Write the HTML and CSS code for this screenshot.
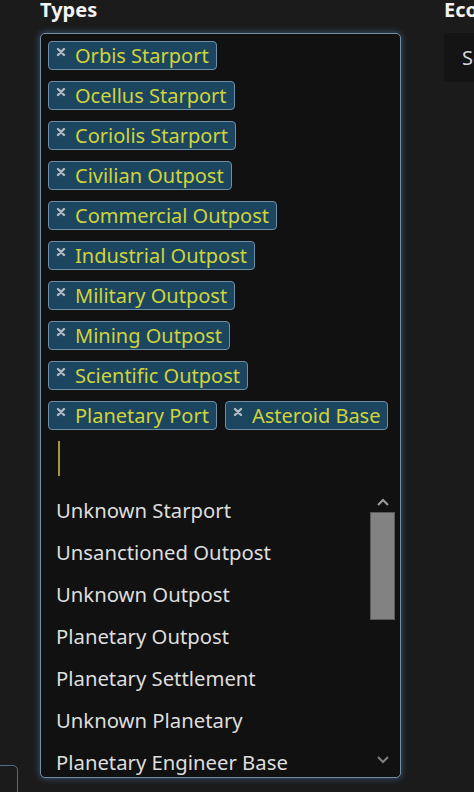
FILE: index.html
```html
<!DOCTYPE html>
<html lang="en">
<head>
<meta charset="utf-8">
<title>Types</title>
<link rel="stylesheet" href="styles.css">
</head>
<body>
<div class="page">
  <div class="field field-types">
    <div class="label">Types</div>
    <div class="multiselect">
      <div class="tags">
        <span class="tag"><svg class="x" viewBox="0 0 10 10"><path d="M2 2 L8 8 M8 2 L2 8"/></svg>Orbis Starport</span>
        <span class="tag"><svg class="x" viewBox="0 0 10 10"><path d="M2 2 L8 8 M8 2 L2 8"/></svg>Ocellus Starport</span>
        <span class="tag"><svg class="x" viewBox="0 0 10 10"><path d="M2 2 L8 8 M8 2 L2 8"/></svg>Coriolis Starport</span>
        <span class="tag"><svg class="x" viewBox="0 0 10 10"><path d="M2 2 L8 8 M8 2 L2 8"/></svg>Civilian Outpost</span>
        <span class="tag"><svg class="x" viewBox="0 0 10 10"><path d="M2 2 L8 8 M8 2 L2 8"/></svg>Commercial Outpost</span>
        <span class="tag"><svg class="x" viewBox="0 0 10 10"><path d="M2 2 L8 8 M8 2 L2 8"/></svg>Industrial Outpost</span>
        <span class="tag"><svg class="x" viewBox="0 0 10 10"><path d="M2 2 L8 8 M8 2 L2 8"/></svg>Military Outpost</span>
        <span class="tag"><svg class="x" viewBox="0 0 10 10"><path d="M2 2 L8 8 M8 2 L2 8"/></svg>Mining Outpost</span>
        <span class="tag"><svg class="x" viewBox="0 0 10 10"><path d="M2 2 L8 8 M8 2 L2 8"/></svg>Scientific Outpost</span>
        <span class="tag"><svg class="x" viewBox="0 0 10 10"><path d="M2 2 L8 8 M8 2 L2 8"/></svg>Planetary Port</span>
        <span class="tag"><svg class="x" viewBox="0 0 10 10"><path d="M2 2 L8 8 M8 2 L2 8"/></svg>Asteroid Base</span>
      </div>
      <div class="input-row"><span class="caret"></span></div>
      <div class="dropdown">
        <ul class="options">
          <li>Unknown Starport</li>
          <li>Unsanctioned Outpost</li>
          <li>Unknown Outpost</li>
          <li>Planetary Outpost</li>
          <li>Planetary Settlement</li>
          <li>Unknown Planetary</li>
          <li>Planetary Engineer Base</li>
        </ul>
        <div class="scrollbar">
          <svg class="arrow" width="14" height="10" viewBox="0 0 14 10"><path d="M2 8 L7 3 L12 8" fill="none" stroke="#9a9a9a" stroke-width="2.2"/></svg>
          <div class="thumb"></div>
          <div class="track"></div>
          <svg class="arrow arrow-down" width="14" height="10" viewBox="0 0 14 10"><path d="M2 2 L7 7 L12 2" fill="none" stroke="#7e7e7e" stroke-width="2.2"/></svg>
        </div>
      </div>
    </div>
  </div>
  <div class="field field-eco">
    <div class="label">Economy</div>
    <div class="select">Select</div>
  </div>
</div>
<div class="corner-box"></div>
</body>
</html>
```
FILE: styles.css
```css
html, body {
  margin: 0;
  padding: 0;
  background: #1b1b1b;
  height: 792px;
  overflow: hidden;
}
body {
  font-family: "Noto Sans", "Open Sans", sans-serif;
  color: #e0e0e0;
  position: relative;
}
.page {
  display: flex;
  gap: 43px;
  padding-left: 40px;
}
.field-types {
  width: 361px;
  flex: none;
}
.field-eco {
  flex: none;
  width: 200px;
}
.label {
  font-weight: 700;
  font-size: 20px;
  line-height: 20px;
  color: #f2f2f2;
  height: 33px;
}
.multiselect {
  box-sizing: border-box;
  height: 745px;
  border: 1px solid #7090aa;
  border-radius: 5px;
  background: #111111;
  box-shadow: 0 0 6px 1px rgba(90, 140, 190, 0.45);
  padding: 7px 5px 0 7px;
  overflow: hidden;
  display: flex;
  flex-direction: column;
}
.tags {
  display: flex;
  flex-wrap: wrap;
  row-gap: 11px;
  column-gap: 8px;
}
.tag {
  display: inline-flex;
  align-items: center;
  box-sizing: border-box;
  height: 29px;
  padding: 0 7px 0 7px;
  background: #1c4660;
  border: 1px solid #6d8fa8;
  border-radius: 4px;
  color: #cfd43c;
  font-size: 20px;
  line-height: 27px;
  white-space: nowrap;
}
.x {
  width: 10px;
  height: 10px;
  align-self: flex-start;
  margin-top: 5px;
  margin-right: 9px;
  fill: none;
  stroke: #b4bcc4;
  stroke-width: 2.4;
  stroke-linecap: round;
}
.input-row {
  height: 59px;
  padding-left: 10px;
  padding-top: 11px;
  box-sizing: border-box;
}
.caret {
  display: block;
  width: 2px;
  height: 35px;
  background: #a8983c;
}
.dropdown {
  display: flex;
  flex: 1;
  min-height: 0;
}
.options {
  list-style: none;
  margin: 0;
  padding: 0 0 0 8px;
  flex: 1;
}
.options li {
  height: 42px;
  line-height: 42px;
  font-size: 20.3px;
  color: #dedede;
  white-space: nowrap;
}
.scrollbar {
  width: 25px;
  flex: none;
  display: flex;
  flex-direction: column;
  align-items: center;
}
.arrow {
  flex: none;
  margin: 8px 0 5px;
}
.arrow-down {
  margin: 0 0 12px;
}
.thumb {
  width: 25px;
  height: 108px;
  box-sizing: border-box;
  background: #828282;
  border: 1px solid #5a5a5a;
  flex: none;
}
.track {
  flex: 1;
}
.select {
  box-sizing: border-box;
  height: 49px;
  background: #141414;
  border-radius: 4px;
  font-size: 20px;
  line-height: 49px;
  padding-left: 18px;
  color: #d8d8d8;
}
.corner-box {
  position: absolute;
  left: -20px;
  top: 765px;
  width: 36px;
  height: 60px;
  border: 1px solid #4f6f88;
  border-radius: 5px;
}
```
